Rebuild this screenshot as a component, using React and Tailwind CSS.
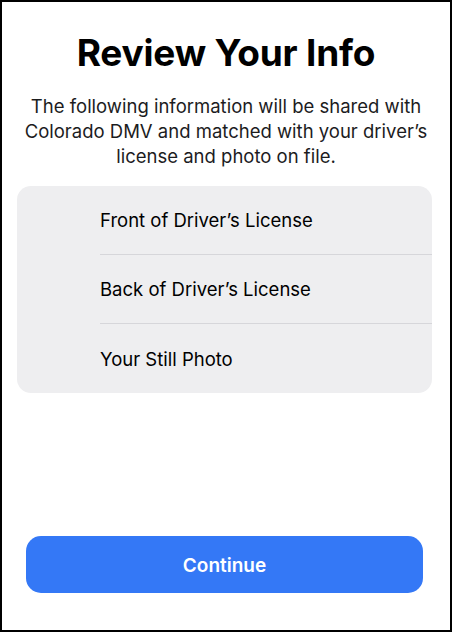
import React from "react";

const items = ["Front of Driver’s License", "Back of Driver’s License", "Your Still Photo"];

export default function App() {
  return (
    <div className="w-[452px] h-[632px] box-border border-2 border-black bg-white flex flex-col font-['Inter',sans-serif] text-black">
      <h1 className="mt-[28px] text-center text-[37px] leading-[46px] font-bold tracking-[-0.2px]">Review Your Info</h1>
      <p className="mt-[18px] px-[16px] text-center text-[18.5px] leading-[25px] text-[#1c1c1e]">
        The following information will be shared with Colorado DMV and matched with your driver’s license and photo on file.
      </p>
      <div className="mt-[17px] ml-[15px] mr-[18px] rounded-[14px] bg-[#eeeef0] flex flex-col">
        {items.map((t, i) => (
          <div key={t} className="pl-[83px]">
            <div className={"h-[69px] flex items-center text-[18.5px] pt-[2px] " + (i < items.length - 1 ? "border-b border-[#d6d6da]" : "")}>
              {t}
            </div>
          </div>
        ))}
      </div>
      <div className="flex-1" />
      <button className="mb-[37px] ml-[24px] mr-[27px] h-[57px] rounded-[15px] bg-[#3478f6] text-white text-[19px] font-semibold pt-[3px]">
        Continue
      </button>
    </div>
  );
}
